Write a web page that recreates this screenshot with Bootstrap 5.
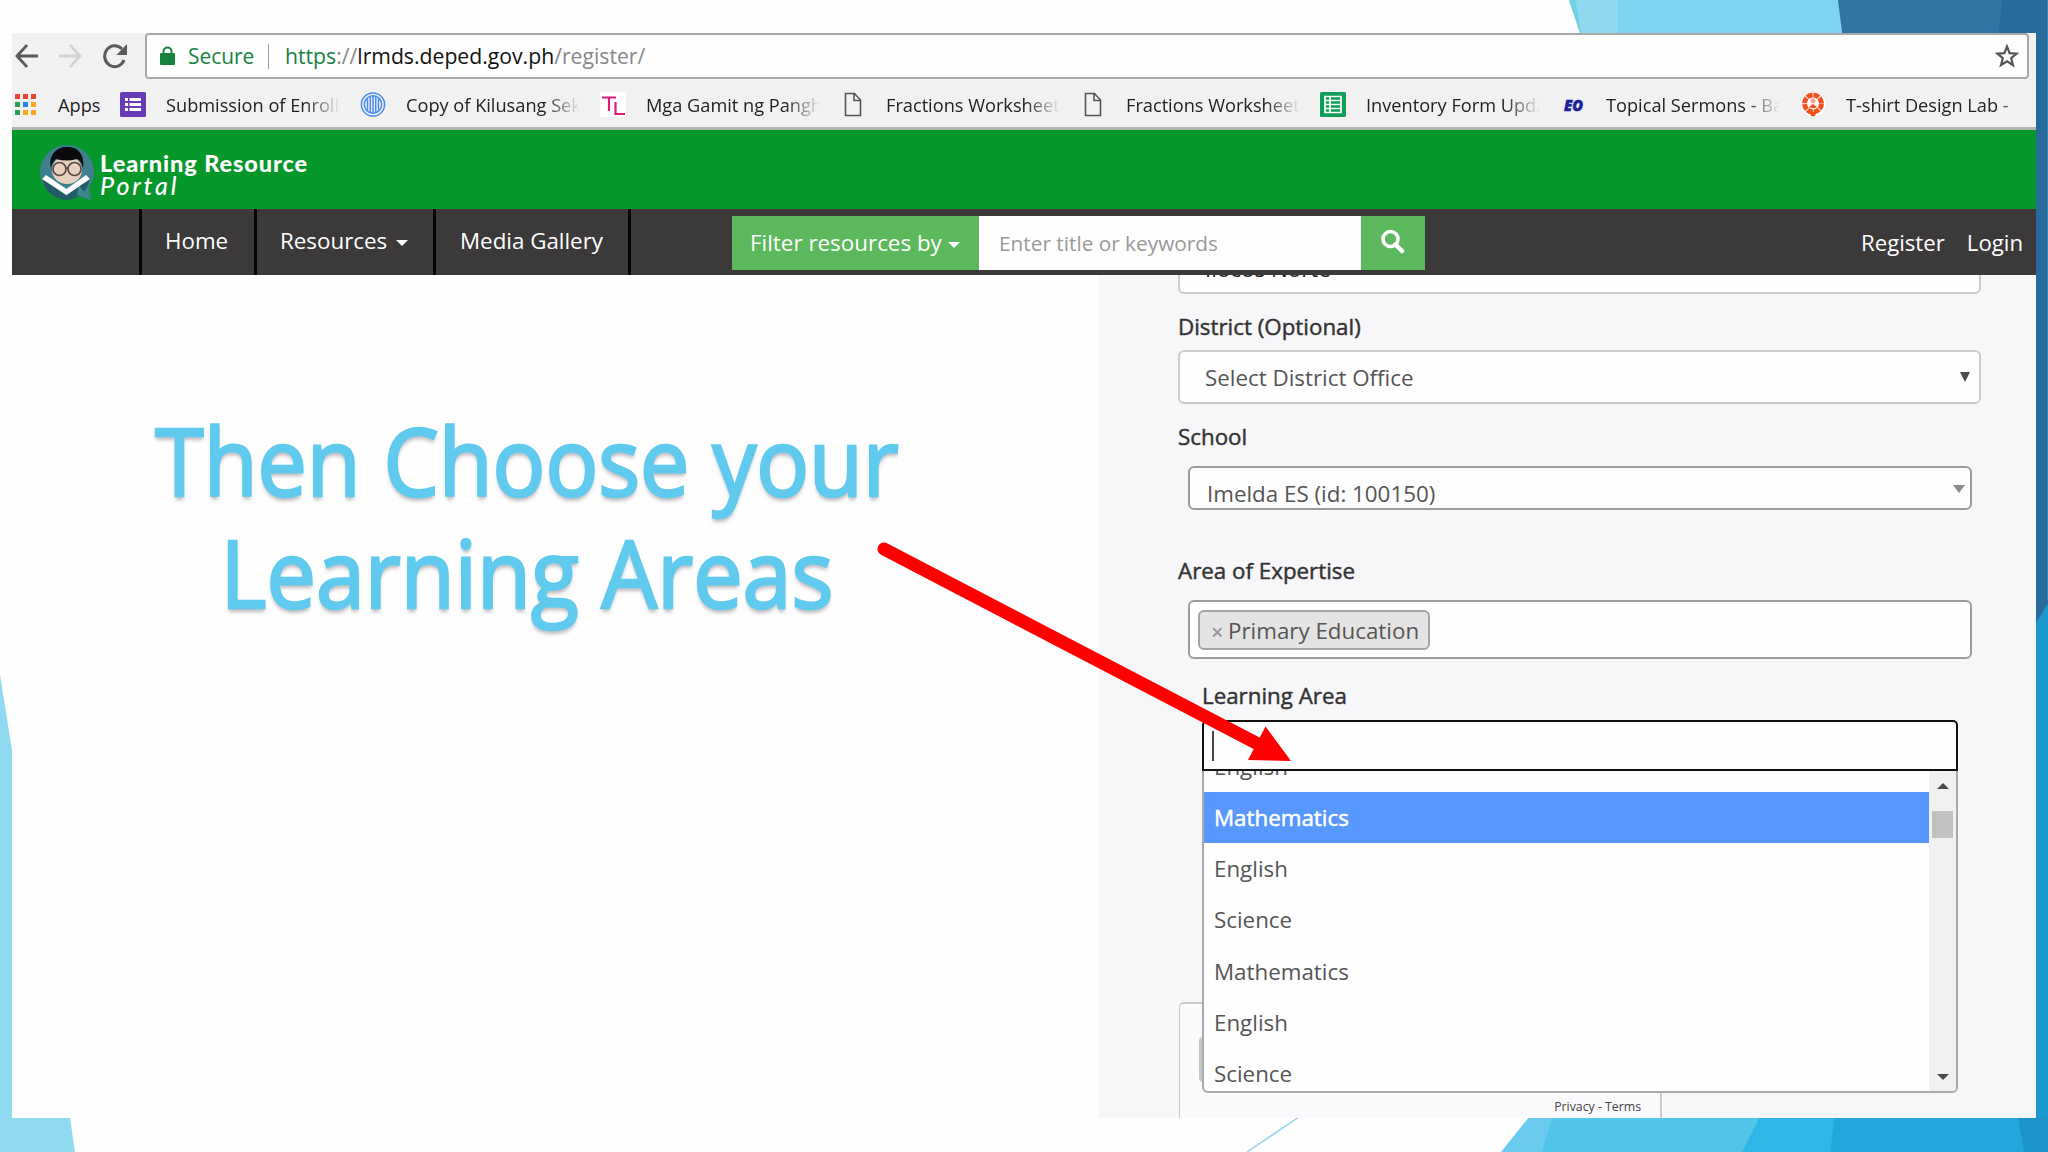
<!DOCTYPE html>
<html lang="en">
<head>
<meta charset="utf-8">
<title>Learning Resource Portal</title>
<link href="https://cdn.jsdelivr.net/npm/bootstrap@5.3.0/dist/css/bootstrap.min.css" rel="stylesheet">
<style>
body{margin:0;background:#fefefe;font-family:"Open Sans","Noto Sans",sans-serif;font-size:22.35px;line-height:30px;color:#555}
.stage{width:2048px;height:1152px}
.backdrop,.pointer{left:0;top:0;width:2048px;height:1152px}
.pointer{z-index:20;pointer-events:none}
.browser{width:2024px;height:1085px;margin:33px 0 0 12px;background:#fefefe}
.toolbar{height:46px;background:#f2f1f2;padding-right:7px}
.tools{width:133px;padding-left:2px;gap:19px}
.omni{height:46px;background:#fefefe;border:2px solid #a9a9a9;border-radius:4px;padding:0 8px 0 13px;font-size:20.9px}
.omni .secure{color:#16823f;margin-left:13px;width:67px}
.omni .bar{width:1px;height:25px;background:#999;margin:0 16px 0 13px}
.omni .url{font-size:21.2px;color:#888}
.url b{font-weight:400;color:#111}.url i{font-style:normal;color:#16823f}
.marks{height:51px;background:#f2f1f2;border-bottom:3px solid #b4b4b4;font-size:18.2px;color:#222;padding:3px 0 0 3px}
.marks .apps{width:105px;gap:22px}
.marks .bm{width:240px;flex:none;gap:20px}
.bm svg{flex:none}
.bm span{width:174px;overflow:hidden;white-space:nowrap;-webkit-mask-image:linear-gradient(90deg,#000 80%,transparent 100%);mask-image:linear-gradient(90deg,#000 80%,transparent 100%)}
.bm:last-child{width:236px}
.bm:last-child span{-webkit-mask-image:linear-gradient(90deg,#000 88%,#0006 96%);mask-image:linear-gradient(90deg,#000 88%,#0006 96%)}
.brandbar{height:79px;background:#06972b;padding:6px 0 0 27px}
.brandtext{color:#fff;margin-left:5px;padding-top:2px}
.brandtext .l1{font:900 23.5px/23px Lato,sans-serif;letter-spacing:.9px}
.brandtext .l2{font:italic 500 25px/21px Lato,sans-serif;letter-spacing:2.8px}
.mainnav{height:66px;background:#3b393a;color:#fff}
.mainnav .lead-in{width:127px}
.mainnav .tab{border-left:3px solid #050505;padding-left:23px;height:66px;line-height:64px}
.caret{display:inline-block;border:6px solid transparent;border-top:6.5px solid currentColor;border-bottom:0;vertical-align:3px;margin-left:9px}
.filter{width:247px;height:54px;background:#5cb85c;line-height:53px;padding-left:18px;font-size:22.4px}
.filter .caret{margin-left:6px}
.query{width:382px;height:54px;background:#fefefe;color:#999;font-size:20.8px;line-height:54px;padding-left:20px}
.go{width:64px;height:54px;background:#5cb85c;padding:0 1px 3px 0}
.content{height:843px;overflow:hidden}
.left{width:1087px;padding-right:57px}
.slide-title{margin:129px 0 0;font-size:93.5px;line-height:112px;font-weight:400;color:#5fcaee;-webkit-text-stroke:2.6px #5fcaee;text-shadow:0 4px 4px rgba(70,70,80,.35);white-space:nowrap}
.slide-title span{display:block}
.slide-title .t1{transform:scaleX(.939)}
.slide-title .t2{transform:scaleX(.941)}
.panel{width:937px;background:#f7f6f9;padding-left:80px}
.lab{height:30px;color:#333;line-height:31px;-webkit-text-stroke:.45px #333;text-indent:-1px}
.fld{width:803px;height:54px;background:#fefefe;border:2px solid #ccc;border-radius:6px;padding:11px 14px 0 25px;margin-left:-1px}
.s2{width:784px;margin-left:9px;background:#fefefe;border:2px solid #9c9c9e;border-radius:6px}
.chip{width:232px;height:40px;background:#e4e4e4;border:2px solid #a5a5a7;border-radius:6px;padding-top:4px;margin:8px 0 0 8px}
.chip .x{color:#999;font-weight:600;font-size:22px;margin-left:11px;width:17px}
.tri{width:0;height:0;border-style:solid;border-color:transparent}
.dd{width:756px;height:51px;margin:10px 0 0 23px}
.search{height:51px;background:#fefefe;border:2px solid #111;border-radius:5px 5px 0 0;padding:9px 0 0 8px}
.cursor{width:2px;height:30px;background:#444}
.menu{left:0;top:51px;width:756px;height:322px;background:#fefefe;border:2px solid #aaa;border-top:0;border-radius:0 0 6px 6px;z-index:5;overflow:hidden}
.opts{width:725px;margin-top:-30.3px}
.opt{height:51.25px;line-height:51px;padding-left:10px}
.opt.on{background:#5897fb;color:#fff;-webkit-text-stroke:.5px #fff}
.track{width:27px;background:#f1f0f2;padding:12px 0 11px}
.captcha{width:483px;height:160px;margin-top:231px;background:#faf9fb;border:1px solid #c9c9cb;border-width:2px 2px 0 1px;border-radius:5px 5px 0 0;padding:33px 19px 0}
.ghost{width:200px;height:45px;background:#c6c6c8;border-radius:4px}
.terms{font-size:12.3px;line-height:16px;color:#444;margin:17px 0 0;text-align:right}
</style>
</head>
<body>
<div class="stage position-relative overflow-hidden">
<svg class="backdrop position-absolute" viewBox="0 0 2048 1152">
<path fill="#7ed3f0" d="M1569 0H1840L1843 40H1582Z"/><path fill="#8fd9f1" d="M1576 0H1618V40H1582Z"/><path fill="#6fd0e0" d="M1569 0h6l6 34z"/>
<path fill="#3075a4" d="M1838 0H2048V40H1843Z"/><path fill="#266b9b" d="M2002 0H2048V640H2036V40H1998Z"/>
<path fill="#1b98cf" d="M2034 626L2048 603V1152H2034Z"/><path fill="#3a86b8" d="M2047 0h1v600h-1z"/>
<path fill="#90dbf1" d="M0 675L12 750V1118H70L75 1152H0Z"/>
<path stroke="#8fd3ee" stroke-width="1.5" d="M1299 1117L1247 1152"/>
<path fill="#68caec" d="M1529 1117H1560V1152H1501Z"/><path fill="#53c4e9" d="M1552 1117H1770V1152H1542Z"/>
<path fill="#2db6e6" d="M1760 1117H1840V1152H1742Z"/><path fill="#22a7db" d="M1835 1117H2030V1152H1830Z"/><path fill="#1c94c9" d="M2018 1117H2048V1152H2024Z"/>
</svg>
<div class="browser position-absolute">
 <div class="toolbar d-flex">
  <div class="tools d-flex align-items-center">
   <svg width="24" height="26" fill="none" stroke="#5a5a5a" stroke-width="2.8"><path d="M24 13H3M13 2L3 13L13 24"/></svg>
   <svg width="26" height="26" fill="none" stroke="#d2d2d2" stroke-width="2.8"><path d="M2 13H23M13 2L23 13L13 24"/></svg>
   <svg width="26" height="26" fill="none" stroke="#5a5a5a" stroke-width="3"><path d="M22 17A10 10.5 0 1 1 20 6"/><path fill="#5a5a5a" stroke="none" d="M25 1V12H14.5Z"/></svg>
  </div>
  <div class="omni d-flex align-items-center flex-grow-1">
   <svg width="15" height="20"><rect x="0" y="7" width="15" height="12" rx="1" fill="#16823f"/><path d="M3.5 8V5.500a4 4 0 0 1 8 0V8" fill="none" stroke="#16823f" stroke-width="2"/></svg>
   <span class="secure">Secure</span><span class="bar"></span>
   <span class="url"><i>https</i>://<b>lrmds.deped.gov.ph</b>/register/</span>
   <svg class="ms-auto" width="24" height="24" viewBox="0 0 24 24" fill="none" stroke="#555" stroke-width="2.2"><path d="M12 2.500L14.600 9.200L21.500 9.700L16.200 14.200L18 21L12 17.300L6 21L7.800 14.200L2.500 9.700L9.400 9.200Z"/></svg>
  </div>
 </div>
 <div class="marks d-flex align-items-center">
  <div class="apps d-flex align-items-center">
   <svg width="21" height="22"><g fill="#ea4335"><path d="M0 0h5v5H0zM8 0h5v5H8zM16 0h5v5h-5z"/></g><g fill="#2e9e57"><path d="M0 8h5v5H0zM0 16h5v5H0z"/></g><path fill="#1e88e5" d="M8 8h5v5H8z"/><path fill="#f9a61a" d="M16 8h5v5h-5zM8 16h5v5H8zM16 16h5v5h-5z"/></svg>
   <span>Apps</span>
  </div>
  <div class="bm d-flex align-items-center"><svg width="26" height="25"><rect width="26" height="25" rx="1.500" fill="#673ab7"/><g fill="#fff"><path d="M5 6h3v3H5zM5 11h3v3H5zM5 16h3v3H5zM9.500 6H21v3H9.500zM9.500 11H21v3H9.500zM9.500 16H21v3H9.500z"/></g></svg><span>Submission of Enroll</span></div>
  <div class="bm d-flex align-items-center"><svg width="26" height="25" fill="none" stroke="#4b8bf0" stroke-width="1.500"><circle cx="13" cy="12.500" r="11.600"/><circle cx="13" cy="12.500" r="8.700"/><path d="M7.500 7v11M10.300 5v15M13 4v17M15.700 5v15M18.500 7v11"/></svg><span>Copy of Kilusang Sek</span></div>
  <div class="bm d-flex align-items-center"><svg width="26" height="25"><path fill="#fff" d="M0 0h26v25H0z"/><path fill="none" stroke="#e5187c" stroke-width="2.200" d="M2 5.500H16M9 5.500V19M15.500 10V22H25"/></svg><span>Mga Gamit ng Pangh</span></div>
  <div class="bm d-flex align-items-center"><svg width="26" height="25" fill="none" stroke="#555" stroke-width="1.600"><path d="M5.500 1.500H14.500L20.500 8V23.500H5.500ZM14 1.500V8.500H20.500"/></svg><span>Fractions Worksheet</span></div>
  <div class="bm d-flex align-items-center"><svg width="26" height="25" fill="none" stroke="#555" stroke-width="1.600"><path d="M5.500 1.500H14.500L20.500 8V23.500H5.500ZM14 1.500V8.500H20.500"/></svg><span>Fractions Worksheet</span></div>
  <div class="bm d-flex align-items-center"><svg width="26" height="25"><rect width="26" height="25" rx="1.500" fill="#0f9d58"/><path fill="none" stroke="#fff" stroke-width="1.700" d="M5 4.500H21V20.500H5ZM5 8.500H21M5 12.500H21M5 16.500H21M10 4.500V20.500"/></svg><span>Inventory Form Upda</span></div>
  <div class="bm d-flex align-items-center"><svg width="26" height="25"><text x="4" y="18.500" font-family="Open Sans, sans-serif" font-weight="800" font-style="italic" font-size="15.500" textLength="19" lengthAdjust="spacingAndGlyphs" fill="#1b2199" stroke="#1b2199" stroke-width=".6">EO</text></svg><span>Topical Sermons - Ba</span></div>
  <div class="bm d-flex align-items-center"><svg width="26" height="25"><circle cx="13" cy="12.500" r="12.500" fill="#fff"/><circle cx="13" cy="11.500" r="8.500" fill="none" stroke="#f4511e" stroke-width="5" stroke-dasharray="5.800 .9"/><circle cx="13" cy="9" r="2.500" fill="#f4a78e"/><path d="M9 15l4-3 4 3-2 1h-4z" fill="#f4511e"/><circle cx="13" cy="22" r="2.500" fill="#f4511e"/></svg><span>T-shirt Design Lab -</span></div>
 </div>
 <div class="brandbar d-flex align-items-center">
  <svg width="56" height="58" viewBox="0 0 56 58"><ellipse cx="28" cy="28" rx="27" ry="27" fill="#3f7f8f"/><path fill="#3f7f8f" d="M36 50L52 56L49 38Z"/><path fill="#235c66" d="M3 33L27 52L51 33Q48 54 28 56Q6 54 3 33Z"/><path fill="#3b8793" d="M40 42L52 56L38 51Z"/><ellipse cx="28" cy="26" rx="15" ry="14" fill="#e6d0bf"/><path fill="#0b0b0d" d="M12 24C9 10 19 2 29 3C40 3 46 12 44 24Q42 16 38 15Q27 18 17 15Q13 18 12 24Z"/><g fill="none" stroke="#5b4a42" stroke-width="1.700"><circle cx="20.500" cy="25" r="6.500"/><circle cx="35.500" cy="25" r="6.500"/><path d="M27 24h2"/></g><path fill="#3a8d96" d="M12 35Q22 42 28 43Q36 41 43 35L28 47Z"/><path fill="#fff" d="M3 35L7 31L27.500 45L47 31L51 35L27.500 51Z"/></svg>
  <div class="brandtext"><div class="l1">Learning Resource</div><div class="l2">Portal</div></div>
 </div>
 <div class="mainnav d-flex">
  <div class="lead-in"></div>
  <div class="tab" style="width:115px">Home</div>
  <div class="tab" style="width:179px">Resources<span class="caret"></span></div>
  <div class="tab" style="width:195px;padding-left:24px">Media Gallery</div>
  <div class="tab" style="width:104px"></div>
  <div class="d-flex" style="padding-top:7px">
   <div class="filter">Filter resources by<span class="caret"></span></div>
   <div class="query">Enter title or keywords</div>
   <div class="go d-flex align-items-center justify-content-center"><svg width="25" height="25" fill="none" stroke="#fff"><circle cx="10.500" cy="10" r="7.500" stroke-width="3.600"/><path d="M15.500 15.500L22 22" stroke-width="4.500" stroke-linecap="round"/></svg></div>
  </div>
  <div class="d-flex ms-auto" style="gap:22px;padding-right:13px;line-height:67px;font-size:22.2px"><span>Register</span><span>Login</span></div>
 </div>
 <div class="content d-flex">
  <div class="left text-center"><h1 class="slide-title"><span class="t1">Then Choose your</span><span class="t2">Learning Areas</span></h1></div>
  <div class="panel">
   <div class="fld" style="margin-top:-35px;color:#222;padding-top:12px">Ilocos Norte</div>
   <div class="lab" style="margin-top:17px">District (Optional)</div>
   <div class="fld d-flex justify-content-between" style="margin-top:9px"><span>Select District Office</span><span class="tri" style="border-width:10px 5px 0;border-top-color:#4a4a4c;margin:9px -5px 0 0"></span></div>
   <div class="lab" style="margin-top:17px">School</div>
   <div class="s2 d-flex justify-content-between" style="height:44px;margin-top:15px;padding:11px 5px 0 17px"><span>Imelda ES (id: 100150)</span><span class="tri" style="border-width:8px 6px 0;border-top-color:#8b8b8d;margin-top:6px"></span></div>
   <div class="lab" style="margin-top:45px">Area of Expertise</div>
   <div class="s2" style="height:59px;margin-top:15px"><div class="chip d-flex"><span class="x">×</span><span>Primary Education</span></div></div>
   <div class="lab" style="margin:21px 0 0 24px">Learning Area</div>
   <div class="dd position-relative">
    <div class="search"><div class="cursor"></div></div>
    <div class="menu d-flex position-absolute">
     <div class="opts"><div class="opt">English</div><div class="opt on">Mathematics</div><div class="opt">English</div><div class="opt">Science</div><div class="opt">Mathematics</div><div class="opt">English</div><div class="opt">Science</div></div>
     <div class="track d-flex flex-column align-items-center"><span class="tri" style="border-width:0 6px 6px;border-bottom-color:#4a4a4c"></span><span style="width:21px;height:27px;background:#c1c1c2;margin-top:22px"></span><span class="tri mt-auto" style="border-width:6px 6px 0;border-top-color:#4a4a4c"></span></div>
    </div>
   </div>
   <div class="captcha"><div class="ghost"></div><div class="terms">Privacy - Terms</div></div>
  </div>
 </div>
</div>
<svg class="pointer position-absolute" viewBox="0 0 2048 1152"><path d="M884 549L1258 744" stroke="#f00" stroke-width="13" stroke-linecap="round"/><path fill="#f00" d="M1291 761L1265.500 726.500L1248 760Z"/></svg>
</div>
<script src="https://cdn.jsdelivr.net/npm/bootstrap@5.3.0/dist/js/bootstrap.bundle.min.js"></script>
</body>
</html>
